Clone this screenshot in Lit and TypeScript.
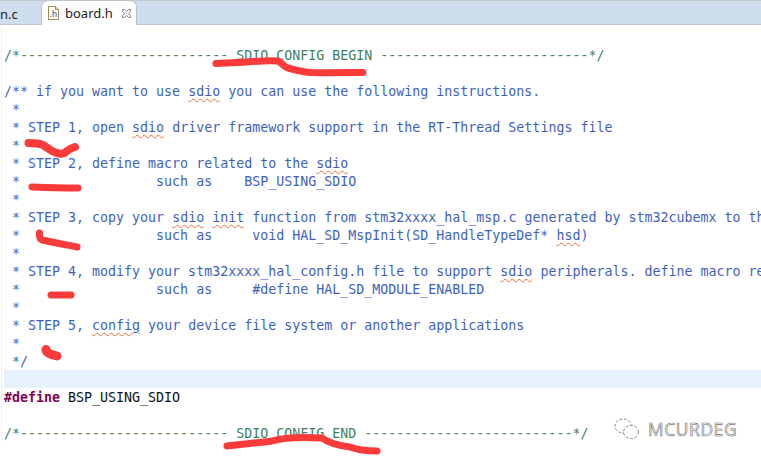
import { LitElement, html, css, svg } from "lit";
import { customElement } from "lit/decorators.js";

const strokes: [string, number][] = [
  ["M216 63.5 C228 63 238 62.5 247 62 C258 61 270 60 278 61 C282 63 284 67 288 68 C296 70 302 72 312 72.5 C330 73 350 72.5 363 72.5", 7],
  ["M28.5 143 C34 143 39 143 43 145 C48 148 52 152 57 153 C62 155 65 153 67 151 C69 149 72 148 75 147", 8],
  ["M32 187 C45 187.5 65 188 78 188", 7],
  ["M39.5 233 C39 238 40 240 45 240.5 C55 243 67 245 77 247", 7],
  ["M51 295 L71 295", 7],
  ["M46 349.5 C46 353 51 354.5 57 356", 9],
  ["M227 446 C240 444 258 443 272 441 C285 437 305 437 322 438 C330 444 342 446 350 447 C358 450 366 451 377 451", 7],
];

@customElement("app-root")
export class AppRoot extends LitElement {
  static styles = css`
    :host { display: block; width: 761px; height: 461px; position: relative; overflow: hidden; background: #fff; }
    .tabs { height: 25px; box-sizing: border-box; background: #cfdeee; display: flex; align-items: flex-start;
      border-top: 1px solid #c3c8cc; border-bottom: 1px solid #bcc8d4;
      font: 14px "Noto Sans", "Open Sans", sans-serif; color: #1c1c1c; }
    .prev { width: 41px; flex: none; height: 23px; line-height: 27px; overflow: hidden; box-sizing: border-box; font-size: 13px; }
    .tab { width: 96px; height: 25px; box-sizing: border-box; background: #fff; border: 1px solid #b9c4cf; border-bottom: none;
      border-radius: 7px 7px 0 0; margin-top: -1px; display: flex; align-items: center; gap: 6px; padding-left: 6px; font-size: 13px; }
    .ic { width: 11px; height: 14px; flex: none; }
    .x { width: 11px; height: 11px; flex: none; margin-left: 2px; }
    .editor { margin-left: 1px; border-left: 1px solid #eef0f2; padding: 21px 0 0 2px; font: 13.3px/20px "DejaVu Sans Mono", monospace; color: #111; }
    .ln { height: 18px; white-space: pre; color: #3f5fbf; }
    .c { color: #3f7f5f; }
    .hl { background: #e8f2fe; }
    .plain { color: #111; }
    .kw { color: #7f0055; font-weight: 700; }
    .sp { text-decoration: underline wavy #e0703c 1px; text-underline-offset: 2px; }
    .ink { position: absolute; left: 0; top: 0; pointer-events: none; }
    .wm { position: absolute; left: 614px; top: 417px; display: flex; align-items: center; gap: 8px; }
    .wm span { font: 17.4px "Open Sans", sans-serif; color: #fff; letter-spacing: 0.6px;
      -webkit-text-stroke: 0.6px #707070; }
  `;

  render() {
    const s = (t: string) => html`<span class="sp">${t}</span>`;
    const dash = "-".repeat(26);
    return html`
      <div class="tabs">
        <div class="prev">n.c</div>
        <div class="tab">
          <svg class="ic" viewBox="0 0 11 14"><path d="M.5.5h7l3 3v10H.5z" fill="#fff" stroke="#a08a50"/><path d="M7.5.5v3h3" fill="#e8d9a8" stroke="#a08a50"/><text x="1.5" y="11" font-size="9" font-family="Liberation Sans" fill="#3a4a6a">.h</text></svg>
          <span>board.h</span>
          <svg class="x" viewBox="0 0 11 11"><path d="M1.5 1.5h2l2 2 2-2h2v2l-2 2 2 2v2h-2l-2-2-2 2h-2v-2l2-2-2-2z" fill="#f2f2f2" stroke="#8c8c8c"/></svg>
        </div>
      </div>
      <div class="editor">
        <div class="ln c">/*${dash} SDIO CONFIG BEGIN ${dash}*/</div>
        <div class="ln"></div>
        <div class="ln">/** if you want to use ${s("sdio")} you can use the following instructions.</div>
        <div class="ln"> *</div>
        <div class="ln"> * STEP 1, open ${s("sdio")} driver framework support in the RT-Thread Settings file</div>
        <div class="ln"> *</div>
        <div class="ln"> * STEP 2, define macro related to the ${s("sdio")}</div>
        <div class="ln"> *                 such as    BSP_USING_SDIO</div>
        <div class="ln"> *</div>
        <div class="ln"> * STEP 3, copy your ${s("sdio")} ${s("init")} function from stm32xxxx_hal_msp.c generated by stm32cubemx to the</div>
        <div class="ln"> *                 such as     void HAL_SD_MspInit(SD_HandleTypeDef* ${s("hsd")})</div>
        <div class="ln"> *</div>
        <div class="ln"> * STEP 4, modify your stm32xxxx_hal_config.h file to support ${s("sdio")} peripherals. define macro re</div>
        <div class="ln"> *                 such as     #define HAL_SD_MODULE_ENABLED</div>
        <div class="ln"> *</div>
        <div class="ln"> * STEP 5, ${s("config")} your device file system or another applications</div>
        <div class="ln"> *</div>
        <div class="ln"> */</div>
        <div class="ln hl"></div>
        <div class="ln plain"><span class="kw">#define</span> BSP_USING_SDIO</div>
        <div class="ln"></div>
        <div class="ln c">/*${dash} SDIO CONFIG END ${dash}*/</div>
      </div>
      <svg class="ink" width="761" height="461" fill="none" stroke="#fb3a3a" stroke-linecap="round" stroke-linejoin="round">
        ${strokes.map(([d, w]) => svg`<path d=${d} stroke-width=${w}></path>`)}
      </svg>
      <div class="wm">
        <svg width="26" height="24" viewBox="0 0 26 24" fill="#fff" stroke="#8a8a8a" stroke-width="1" stroke-dasharray="3 1.5"><ellipse cx="9" cy="9" rx="8" ry="7"/><ellipse cx="17" cy="15" rx="7.5" ry="6.5"/></svg>
        <span>MCURDEG</span>
      </div>
    `;
  }
}
